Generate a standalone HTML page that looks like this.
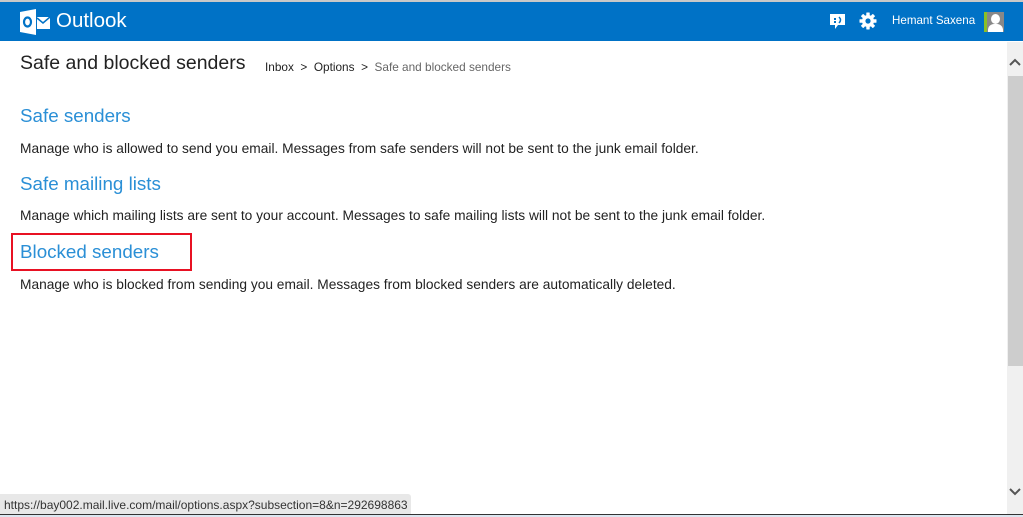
<!DOCTYPE html>
<html><head><meta charset="utf-8"><style>
*{margin:0;padding:0;box-sizing:border-box}
body{width:1023px;height:517px;overflow:hidden;background:#fff;font-family:"Liberation Sans",sans-serif;position:relative;color:#222}
.top{position:absolute;left:0;top:0;width:1023px;height:2px;background:#c8c8c8}
.hdr{position:absolute;left:0;top:2px;width:1023px;height:39px;background:#0072c6;color:#fff}
.abs{position:absolute;white-space:nowrap}
.h{color:#2a8fd6;font-size:18.8px}
.p{font-size:13.75px;color:#222}
</style></head><body>
<div class="top"></div>
<div class="hdr">
 <svg class="abs" style="left:20px;top:7px" width="32" height="26" viewBox="0 0 32 26">
  <path d="M0 3 L16 0 L16 26 L0 23 Z" fill="#fff"/>
  <ellipse cx="7.5" cy="13" rx="3.5" ry="4.5" fill="none" stroke="#0072c6" stroke-width="2.2"/>
  <path d="M17 8 L30 8 L30 20 L17 20 Z" fill="#fff"/>
  <path d="M17 9 L23 14 L30 8" fill="none" stroke="#0072c6" stroke-width="1.5"/>
 </svg>
 <div class="abs" style="left:56px;top:7px;font-size:20.5px">Outlook</div>
 <svg class="abs" style="left:829px;top:11px" width="17" height="17" viewBox="0 0 17 17">
  <path d="M1 1 H16 V12 H9 L6 16 V12 H1 Z" fill="#fff"/>
  <rect x="5" y="5" width="2" height="2" fill="#0072c6"/><rect x="5" y="8" width="2" height="2" fill="#0072c6"/>
  <path d="M10 4 Q13 7 10 10" stroke="#0072c6" stroke-width="1.5" fill="none"/>
 </svg>
 <svg class="abs" style="left:859px;top:10px" width="18" height="18" viewBox="0 0 18 18">
  <g fill="#fff"><circle cx="9" cy="9" r="6"/>
  <rect x="7.3" y="0.5" width="3.4" height="17" rx="0.5"/>
  <rect x="7.3" y="0.5" width="3.4" height="17" rx="0.5" transform="rotate(45 9 9)"/>
  <rect x="7.3" y="0.5" width="3.4" height="17" rx="0.5" transform="rotate(90 9 9)"/>
  <rect x="7.3" y="0.5" width="3.4" height="17" rx="0.5" transform="rotate(135 9 9)"/></g>
  <circle cx="9" cy="9" r="2.6" fill="#0072c6"/>
 </svg>
 <div class="abs" style="left:892px;top:12px;font-size:11.6px">Hemant Saxena</div>
 <div class="abs" style="left:984px;top:10px;width:3px;height:20px;background:#8cbf26"></div>
 <div class="abs" style="left:987px;top:10px;width:17px;height:20px;background:#888;overflow:hidden">
  <div class="abs" style="left:4px;top:2px;width:9px;height:10px;border-radius:50%;background:#fff"></div>
  <div class="abs" style="left:1px;top:12px;width:15px;height:10px;border-radius:6px 6px 0 0;background:#fff"></div>
 </div>
</div>
<div class="abs" style="left:20px;top:52px;font-size:19.5px;color:#222">Safe and blocked senders</div>
<div class="abs" style="left:265px;top:60px;font-size:11.8px;color:#222">Inbox &nbsp;&gt;&nbsp; Options &nbsp;&gt;&nbsp; <span style="color:#666">Safe and blocked senders</span></div>
<div class="abs h" style="left:20px;top:105px">Safe senders</div>
<div class="abs p" style="left:20px;top:141px">Manage who is allowed to send you email. Messages from safe senders will not be sent to the junk email folder.</div>
<div class="abs h" style="left:20px;top:173px">Safe mailing lists</div>
<div class="abs p" style="left:20px;top:208px">Manage which mailing lists are sent to your account. Messages to safe mailing lists will not be sent to the junk email folder.</div>
<div class="abs h" style="left:20px;top:241px">Blocked senders</div>
<div class="abs" style="left:11px;top:233px;width:181px;height:38px;border:2.5px solid #e81123"></div>
<div class="abs p" style="left:20px;top:277px">Manage who is blocked from sending you email. Messages from blocked senders are automatically deleted.</div>
<div class="abs" style="left:1007px;top:42px;width:16px;height:475px;background:#f0f0f0"></div>
<div class="abs" style="left:1008px;top:76px;width:15px;height:290px;background:#cdcdcd"></div>
<svg class="abs" style="left:1009px;top:58px" width="12" height="8" viewBox="0 0 12 8"><path d="M1 7 L6 2 L11 7" stroke="#555" stroke-width="2" fill="none"/></svg>
<svg class="abs" style="left:1009px;top:488px" width="12" height="8" viewBox="0 0 12 8"><path d="M1 1 L6 6 L11 1" stroke="#555" stroke-width="2" fill="none"/></svg>
<div class="abs" style="left:0;top:494px;width:411px;height:20px;background:#e8e8e8;border-radius:0 3px 0 0"></div>
<div class="abs" style="left:4px;top:498px;font-size:12px;color:#333">https://bay002.mail.live.com/mail/options.aspx?subsection=8&amp;n=292698863</div>
<div class="abs" style="left:0;top:514px;width:1023px;height:1px;background:#333"></div>
<div class="abs" style="left:0;top:515px;width:1023px;height:2px;background:#dce6f0"></div>
</body></html>
